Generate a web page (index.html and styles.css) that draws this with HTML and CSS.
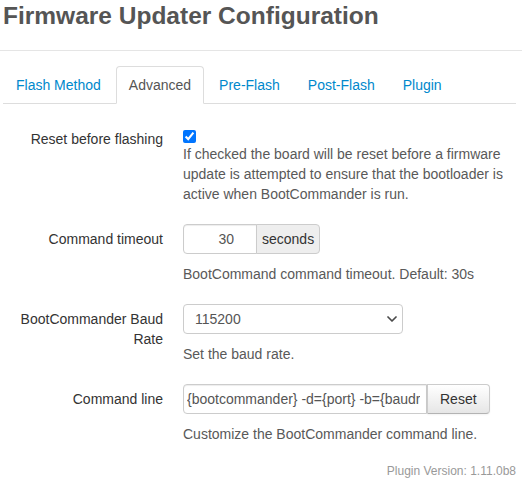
FILE: index.html
```html
<!DOCTYPE html>
<html lang="en">
<head>
<meta charset="utf-8">
<title>Firmware Updater Configuration</title>
<link rel="stylesheet" href="styles.css">
</head>
<body>
<div class="header">
  <h3 class="title">Firmware Updater Configuration</h3>
</div>
<div class="content">
  <ul class="tabs">
    <li class="tab"><a class="tab-link" href="#">Flash Method</a></li>
    <li class="tab"><a class="tab-link active" href="#">Advanced</a></li>
    <li class="tab"><a class="tab-link" href="#">Pre-Flash</a></li>
    <li class="tab"><a class="tab-link" href="#">Post-Flash</a></li>
    <li class="tab"><a class="tab-link" href="#">Plugin</a></li>
  </ul>
  <form class="form">
    <div class="group">
      <label class="label">Reset before flashing</label>
      <div class="controls">
        <div class="check-row"><input class="check" type="checkbox" checked></div>
        <span class="help help-flush">If checked the board will be reset before a firmware update is attempted to ensure that the bootloader is active when BootCommander is run.</span>
      </div>
    </div>
    <div class="group">
      <label class="label">Command timeout</label>
      <div class="controls">
        <div class="append">
          <input class="input input-mini" type="text" value="30">
          <span class="addon">seconds</span>
        </div>
        <span class="help">BootCommand command timeout. Default: 30s</span>
      </div>
    </div>
    <div class="group">
      <label class="label">BootCommander Baud Rate</label>
      <div class="controls">
        <div class="select-wrap">
          <select class="select">
            <option>115200</option>
            <option>57600</option>
            <option>38400</option>
            <option>19200</option>
            <option>9600</option>
          </select>
          <svg class="chev" width="10" height="6" viewBox="0 0 10 6"><path d="M1 1 L5 5 L9 1" fill="none" stroke="#4a4a4a" stroke-width="1.7" stroke-linecap="round" stroke-linejoin="round"/></svg>
        </div>
        <span class="help">Set the baud rate.</span>
      </div>
    </div>
    <div class="group">
      <label class="label">Command line</label>
      <div class="controls">
        <div class="append">
          <input class="input input-cmd" type="text" value="{bootcommander} -d={port} -b={baudrate} {firmware}">
          <button class="btn" type="button">Reset</button>
        </div>
        <span class="help">Customize the BootCommander command line.</span>
      </div>
    </div>
  </form>
  <div class="version">Plugin Version: 1.11.0b8</div>
</div>
</body>
</html>
```
FILE: styles.css
```css
* { box-sizing: border-box; }

html, body {
  margin: 0;
  padding: 0;
  background: #fff;
}

body {
  font-family: "Liberation Sans", Arial, sans-serif;
  font-size: 14px;
  line-height: 20px;
  color: #333;
}

.header {
  padding: 1px 3px 19px;
  border-bottom: 1px solid #e5e5e5;
}

.title {
  margin: 0;
  font-size: 24.5px;
  line-height: 30px;
  font-weight: bold;
  color: #555;
}

.content {
  padding: 0 6px 0 3px;
}

.tabs {
  display: flex;
  margin: 15px 0 20px;
  padding: 0;
  list-style: none;
  border-bottom: 1px solid #ddd;
}

.tab {
  margin-bottom: -1px;
}

.tab-link {
  display: block;
  padding: 8px 12px;
  margin-right: 2px;
  line-height: 20px;
  border: 1px solid transparent;
  border-radius: 4px 4px 0 0;
  color: #0088cc;
  text-decoration: none;
}

.tab-link.active {
  color: #555;
  background: #fff;
  border-color: #ddd #ddd transparent;
}

.form {
  margin: 0;
}

.group {
  display: flex;
  margin-bottom: 20px;
}

.label {
  flex: 0 0 160px;
  width: 160px;
  padding-top: 5px;
  text-align: right;
  color: #333;
}

.controls {
  flex: 1;
  margin-left: 20px;
  min-width: 0;
}

.check-row {
  height: 20px;
  padding-top: 6px;
}

.check {
  display: block;
  width: 13px;
  height: 13px;
  margin: 0;
}

.help {
  display: block;
  margin-top: 10px;
  color: #595959;
}

.help-flush {
  margin-top: 0;
}

.append {
  display: flex;
}

.input {
  height: 30px;
  padding: 4px 6px;
  margin: 0;
  font-family: inherit;
  font-size: 14px;
  line-height: 20px;
  color: #555;
  background: #fff;
  border: 1px solid #ccc;
  border-radius: 4px 0 0 4px;
  box-shadow: inset 0 1px 1px rgba(0, 0, 0, 0.075);
  outline: none;
}

.input-mini {
  width: 74px;
  padding-right: 22px;
  text-align: right;
}

.input-cmd {
  width: 244px;
  padding-left: 3px;
}

.addon {
  height: 30px;
  padding: 4px 5px;
  margin-left: -1px;
  line-height: 20px;
  color: #333;
  background: #eee;
  border: 1px solid #ccc;
  border-radius: 0 4px 4px 0;
}

.btn {
  height: 30px;
  padding: 4px 12px;
  margin: 0;
  font-family: inherit;
  font-size: 14px;
  line-height: 20px;
  color: #333;
  background: linear-gradient(#ffffff, #e6e6e6);
  border: 1px solid #ccc;
  border-bottom-color: #b3b3b3;
  border-radius: 0 4px 4px 0;
  box-shadow: inset 0 1px 0 rgba(255, 255, 255, 0.2), 0 1px 2px rgba(0, 0, 0, 0.05);
}

.select-wrap {
  position: relative;
  width: 220px;
  height: 30px;
}

.select {
  display: block;
  width: 220px;
  height: 30px;
  padding: 4px 6px 4px 11px;
  margin: 0;
  font-family: inherit;
  font-size: 14px;
  line-height: 20px;
  color: #555;
  background: #fff;
  border: 1px solid #ccc;
  border-radius: 4px;
  -webkit-appearance: none;
  appearance: none;
  outline: none;
}

.chev {
  position: absolute;
  right: 6px;
  top: 12px;
  pointer-events: none;
}

.version {
  margin-top: 20px;
  font-size: 12px;
  line-height: 14px;
  text-align: right;
  color: #999;
}
```
